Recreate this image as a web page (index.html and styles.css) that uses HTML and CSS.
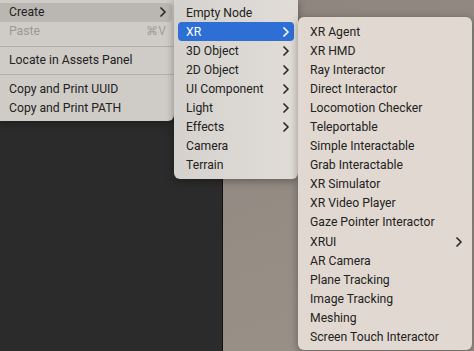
FILE: index.html
```html
<!DOCTYPE html>
<html lang="en">
<head>
    <meta charset="UTF-8">
    <title>Context Menu</title>
    <link rel="stylesheet" href="styles.css">
</head>
<body>
    <!-- editor backdrop -->
    <div class="editor">
        <div class="hierarchy"></div>
        <div class="viewport"></div>
    </div>

    <!-- context menu -->
    <div class="menu menu-main">
        <div class="item active">Create
            <svg class="chev" viewBox="0 0 6 10"><path d="M1 1l4 4-4 4"/></svg>
        </div>
        <div class="item disabled">Paste <span class="shortcut">⌘V</span></div>
        <div class="sep"></div>
        <div class="item">Locate in Assets Panel</div>
        <div class="sep"></div>
        <div class="item">Copy and Print UUID</div>
        <div class="item">Copy and Print PATH</div>
    </div>

    <!-- create submenu -->
    <div class="menu menu-create">
        <div class="item">Empty Node</div>
        <div class="item selected">XR
            <svg class="chev" viewBox="0 0 6 10"><path d="M1 1l4 4-4 4"/></svg>
        </div>
        <div class="item">3D Object
            <svg class="chev" viewBox="0 0 6 10"><path d="M1 1l4 4-4 4"/></svg>
        </div>
        <div class="item">2D Object
            <svg class="chev" viewBox="0 0 6 10"><path d="M1 1l4 4-4 4"/></svg>
        </div>
        <div class="item">UI Component
            <svg class="chev" viewBox="0 0 6 10"><path d="M1 1l4 4-4 4"/></svg>
        </div>
        <div class="item">Light
            <svg class="chev" viewBox="0 0 6 10"><path d="M1 1l4 4-4 4"/></svg>
        </div>
        <div class="item">Effects
            <svg class="chev" viewBox="0 0 6 10"><path d="M1 1l4 4-4 4"/></svg>
        </div>
        <div class="item">Camera</div>
        <div class="item">Terrain</div>
    </div>

    <!-- xr submenu -->
    <div class="menu menu-xr">
        <div class="item">XR Agent</div>
        <div class="item">XR HMD</div>
        <div class="item">Ray Interactor</div>
        <div class="item">Direct Interactor</div>
        <div class="item">Locomotion Checker</div>
        <div class="item">Teleportable</div>
        <div class="item">Simple Interactable</div>
        <div class="item">Grab Interactable</div>
        <div class="item">XR Simulator</div>
        <div class="item">XR Video Player</div>
        <div class="item">Gaze Pointer Interactor</div>
        <div class="item">XRUI
            <svg class="chev" viewBox="0 0 6 10"><path d="M1 1l4 4-4 4"/></svg>
        </div>
        <div class="item">AR Camera</div>
        <div class="item">Plane Tracking</div>
        <div class="item">Image Tracking</div>
        <div class="item">Meshing</div>
        <div class="item">Screen Touch Interactor</div>
    </div>
</body>
</html>
```

FILE: styles.css
```css
/* reset */
* {
    margin: 0;
    padding: 0;
    box-sizing: border-box;
}

body {
    width: 474px;
    height: 351px;
    overflow: hidden;
    position: relative;
    font-family: Roboto, "Noto Sans", sans-serif;
    font-size: 12.2px;
    color: #232221;
    background-color: #8e8680;
}

/* editor backdrop */
.editor {
    display: flex;
    height: 100%;
}

.hierarchy {
    width: 223px;
    background-color: #2b2b2b;
    border-right: 1px solid #121212;
}

.viewport {
    flex: 1;
    background: linear-gradient(160deg, #8d857e 0%, #968d85 60%, #9a9087 100%);
}

/* menus */
.menu {
    position: absolute;
    display: flex;
    flex-direction: column;
    box-shadow: 0 2px 8px rgba(0, 0, 0, 0.35);
}

.item {
    height: 19px;
    display: flex;
    align-items: center;
    justify-content: space-between;
    padding: 0 12px;
    white-space: nowrap;
}

.chev {
    width: 6px;
    height: 10px;
    fill: none;
    stroke: #2a2928;
    stroke-width: 1.7;
    stroke-linecap: round;
    stroke-linejoin: round;
}

.sep {
    height: 1px;
    margin: 4px 0 4px 0;
    background-color: #b3b0ac;
}

/* main context menu */
.menu-main {
    left: -4px;
    top: 0;
    width: 178px;
    height: 121px;
    padding: 3px 0 4px;
    background-color: #cfccc8;
    border-radius: 0 0 6px 0;
}

.menu-main .item {
    padding: 0 8px 0 13px;
}

.menu-main .item.active {
    background-color: #bab7b3;
    border-radius: 0 4px 4px 0;
    margin-right: 2px;
    padding-right: 6px;
}

.menu-main .item.disabled {
    color: #9b9894;
}

.shortcut {
    color: #a19e9a;
    font-size: 12px;
}

.menu-main .sep {
    margin: 5px 0 4px;
}

/* create submenu */
.menu-create {
    left: 174px;
    top: 0;
    width: 124px;
    height: 179px;
    padding: 3px 4px 5px;
    background: linear-gradient(90deg, #d5d2cd 0%, #dcd8d3 60%, #e1dcd6 100%);
    border-radius: 0 0 6px 6px;
    z-index: 2;
}

.menu-create .item {
    padding: 0 5px 0 8px;
}

.menu-create .item.selected {
    background-color: #2d6fd4;
    color: #ffffff;
    border-radius: 4px;
}

.menu-create .item.selected .chev {
    stroke: #ffffff;
}

/* xr submenu */
.menu-xr {
    left: 298px;
    top: 17px;
    width: 174px;
    height: 333px;
    padding: 5px 4px 0;
    background-color: #e1d9d1;
    border-radius: 6px;
    z-index: 3;
}

.menu-xr .item {
    height: 19.1px;
    padding: 0 6px 0 8px;
}
```
